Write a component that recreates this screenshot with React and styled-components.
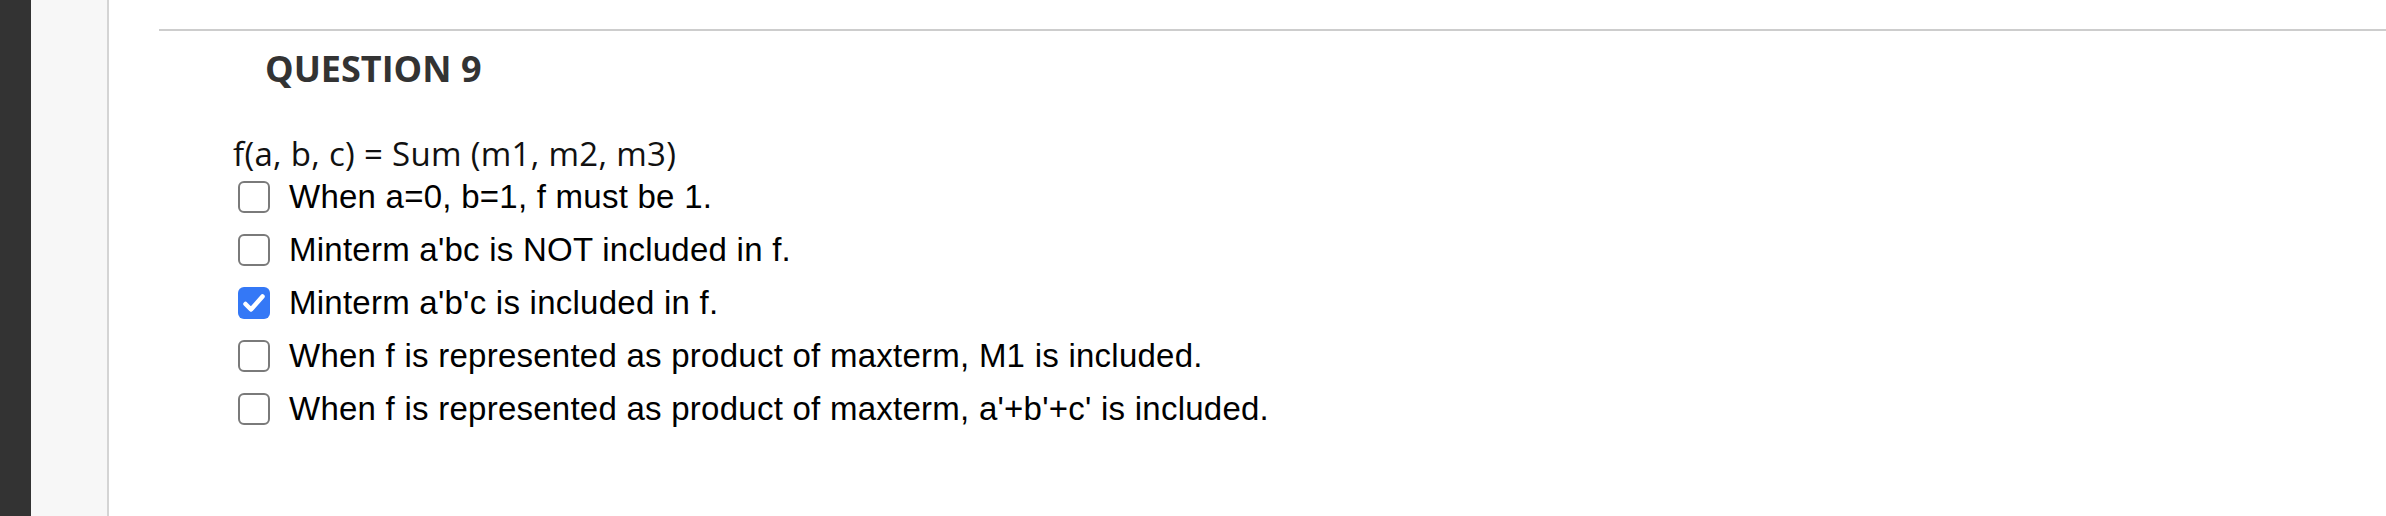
import React from "react";
import styled, { createGlobalStyle } from "styled-components";

const GlobalStyle = createGlobalStyle`
  html, body { margin: 0; padding: 0; background: #ffffff; }
  body { font-family: "Liberation Sans", Arial, sans-serif; }
`;

const Page = styled.div`
  display: flex;
  min-height: 100vh;
`;

const Rail = styled.div`
  width: 31px;
  flex: none;
  background: #333333;
`;

const Gutter = styled.div`
  width: 76px;
  flex: none;
  background: #f7f7f7;
  border-right: 2px solid #d4d4d4;
`;

const Main = styled.main`
  flex: 1;
  padding: 29px 0 0 50px;
`;

const Divider = styled.hr`
  margin: 0;
  border: none;
  height: 2px;
  background: #cdcdcd;
`;

const Title = styled.h2`
  margin: 20px 0 0 106px;
  font-family: "Open Sans", sans-serif;
  font-weight: 700;
  font-size: 36px;
  line-height: 36px;
  color: #333333;
`;

const Body = styled.div`
  margin: 51px 0 0 74px;
`;

const Prompt = styled.p`
  margin: 0;
  font-family: "Open Sans", sans-serif;
  font-size: 33px;
  line-height: 32px;
  letter-spacing: 0.3px;
  color: #111111;
`;

const Options = styled.ul`
  list-style: none;
  margin: 0;
  padding: 0 0 0 5px;
`;

const Option = styled.li`
  display: flex;
  align-items: center;
  gap: 19px;
  height: 53px;
  font-family: "Liberation Sans", Arial, sans-serif;
  font-size: 33px;
  letter-spacing: 0.25px;
  line-height: 53px;
  color: #000000;
`;

const Box = styled.span`
  box-sizing: border-box;
  width: 32px;
  height: 32px;
  flex: none;
  border-radius: 6px;
  display: flex;
  align-items: center;
  justify-content: center;
  background: ${(p) => (p.$checked ? "#3478f6" : "#ffffff")};
  border: ${(p) => (p.$checked ? "none" : "2px solid #7a7a7a")};
`;

const options = [
  { text: "When a=0, b=1, f must be 1.", checked: false },
  { text: "Minterm a'bc is NOT included in f.", checked: false },
  { text: "Minterm a'b'c is included in f.", checked: true },
  { text: "When f is represented as product of maxterm, M1 is included.", checked: false },
  { text: "When f is represented as product of maxterm, a'+b'+c' is included.", checked: false },
];

function Check({ checked }) {
  return (
    <Box $checked={checked} role="checkbox" aria-checked={checked}>
      {checked && (
        <svg width="32" height="32" viewBox="0 0 32 32">
          <path
            d="M7.5 17 L13 22.5 L24.5 9.5"
            fill="none"
            stroke="#ffffff"
            strokeWidth="4.5"
            strokeLinecap="round"
            strokeLinejoin="round"
          />
        </svg>
      )}
    </Box>
  );
}

export default function App() {
  return (
    <>
      <GlobalStyle />
      <Page>
        <Rail />
        <Gutter />
        <Main>
          <Divider />
          <Title>QUESTION 9</Title>
          <Body>
            <Prompt>f(a, b, c) = Sum (m1, m2, m3)</Prompt>
            <Options>
              {options.map((o) => (
                <Option key={o.text}>
                  <Check checked={o.checked} />
                  <span>{o.text}</span>
                </Option>
              ))}
            </Options>
          </Body>
        </Main>
      </Page>
    </>
  );
}
